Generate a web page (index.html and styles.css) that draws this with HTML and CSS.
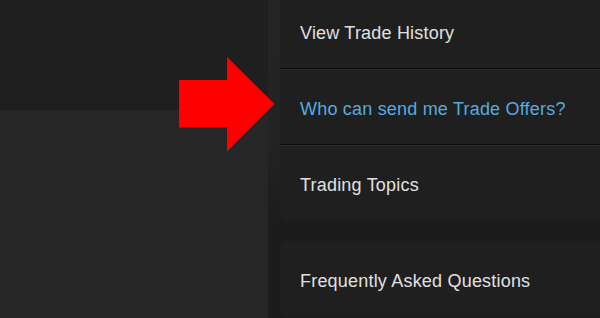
FILE: index.html
```html
<!DOCTYPE html>
<html lang="en">
<head>
    <meta charset="UTF-8">
    <meta name="viewport" content="width=device-width, initial-scale=1.0">
    <title>Trade Offers</title>
    <link rel="stylesheet" href="styles.css">
</head>
<body>
    <div class="page">
        <div class="main">
            <div class="main-top"></div>
            <div class="main-body"></div>
        </div>
        <div class="gutter"></div>
        <div class="sidebar">
            <div class="panel panel-links">
                <a class="row" href="#">View Trade History</a>
                <a class="row active" href="#">Who can send me Trade Offers?</a>
                <a class="row" href="#">Trading Topics</a>
            </div>
            <div class="panel">
                <a class="row" href="#">Frequently Asked Questions</a>
            </div>
        </div>
    </div>

    <!-- callout arrow -->
    <svg class="arrow" width="100" height="100" viewBox="179 57 96 95">
        <polygon points="179,80 227,80 227,57 274.5,104 227,151.5 227,127.5 179,127.5" fill="#ff0000"/>
    </svg>
</body>
</html>
```

FILE: styles.css
```css
html, body {
    margin: 0;
    height: 100%;
    overflow: hidden;
}
body {
    background: #1b1b1b;
    font-family: "Liberation Sans", Arial, sans-serif;
}
.page {
    display: flex;
    height: 318px;
}
.main {
    flex: none;
    width: 268px;
    display: flex;
    flex-direction: column;
}
.main-top {
    height: 110px;
    background: #1f1f1f;
}
.main-body {
    flex: 1;
    background: #262626;
}
.gutter {
    flex: none;
    width: 12px;
    background: linear-gradient(to bottom, #252525 0%, #232323 45%, #1c1c1c 70%, #1c1c1c 100%);
}
.sidebar {
    flex: 1;
    min-width: 0;
    display: flex;
    flex-direction: column;
    gap: 21px;
}
.panel {
    background: #1f1f1f;
    border-radius: 6px;
    width: 340px;
    display: flex;
    flex-direction: column;
}
.panel-links {
    margin-top: -7px;
}
.row {
    display: block;
    height: 73px;
    padding-top: 2px;
    line-height: 76px;
    padding-left: 20px;
    font-size: 18px;
    letter-spacing: 0.2px;
    color: #e0e0e0;
    text-decoration: none;
    white-space: nowrap;
}
.row + .row {
    border-top: 1px solid #0d0d0d;
    box-shadow: inset 0 1px 0 #2a2a2a;
}
.row.active {
    color: #57abdf;
}
.arrow {
    position: absolute;
    left: 179px;
    top: 57px;
    width: 96px;
    height: 95px;
}
```
